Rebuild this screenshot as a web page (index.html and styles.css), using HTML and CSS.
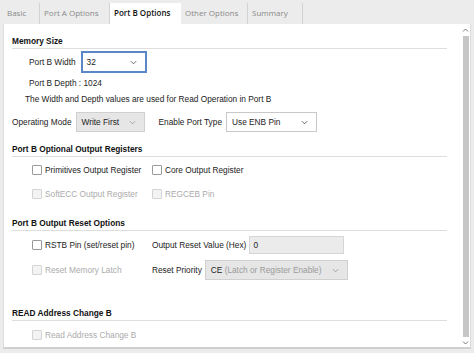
FILE: index.html
```html
<!DOCTYPE html>
<html>
<head>
<meta charset="utf-8">
<link rel="stylesheet" href="styles.css">
</head>
<body>
<div class="window">
  <div class="tabs">
    <div class="tab">Basic</div>
    <div class="tab">Port A Options</div>
    <div class="tab active">Port B Options</div>
    <div class="tab">Other Options</div>
    <div class="tab">Summary</div>
  </div>
  <div class="panel">
    <div class="content">
      <div class="section s1">Memory Size</div>
      <div class="row r-width">
        <span class="label">Port B Width</span>
        <div class="select focus w-66"><span>32</span><svg class="chev" viewBox="0 0 8 5"><path d="M1 1 L4 4 L7 1"/></svg></div>
      </div>
      <div class="line r-depth">Port B Depth : 1024</div>
      <div class="line r-note">The Width and Depth values are used for Read Operation in Port B</div>
      <div class="row r-mode">
        <span class="label">Operating Mode</span>
        <div class="select disabled w-69"><span>Write First</span><svg class="chev" viewBox="0 0 8 5"><path d="M1 1 L4 4 L7 1"/></svg></div>
        <span class="label gap-l">Enable Port Type</span>
        <div class="select w-91"><span>Use ENB Pin</span><svg class="chev" viewBox="0 0 8 5"><path d="M1 1 L4 4 L7 1"/></svg></div>
      </div>

      <div class="section s2">Port B Optional Output Registers</div>
      <div class="grid g2">
        <label class="check"><span class="box"></span>Primitives Output Register</label>
        <label class="check"><span class="box"></span>Core Output Register</label>
        <label class="check off"><span class="box"></span>SoftECC Output Register</label>
        <label class="check off"><span class="box"></span>REGCEB Pin</label>
      </div>

      <div class="section s3">Port B Output Reset Options</div>
      <div class="grid g3">
        <label class="check"><span class="box"></span>RSTB Pin (set/reset pin)</label>
        <div class="field"><span class="label">Output Reset Value (Hex)</span><div class="input">0</div></div>
        <label class="check off"><span class="box"></span>Reset Memory Latch</label>
        <div class="field"><span class="label">Reset Priority</span><div class="select disabled w-143"><span><b class="dk">CE</b> (Latch or Register Enable)</span><svg class="chev" viewBox="0 0 8 5"><path d="M1 1 L4 4 L7 1"/></svg></div></div>
      </div>

      <div class="section s4">READ Address Change B</div>
      <div class="grid g4">
        <label class="check off"><span class="box"></span>Read Address Change B</label>
      </div>
    </div>
    <div class="scrollbar">
      <svg class="arrow" viewBox="0 0 7 4"><path d="M1 3.5 L3.5 1 L6 3.5"/></svg>
      <div class="thumb"></div>
      <svg class="arrow" viewBox="0 0 7 4"><path d="M1 0.5 L3.5 3 L6 0.5"/></svg>
    </div>
  </div>
</div>
</body>
</html>
```
FILE: styles.css
```css
* { box-sizing: border-box; }
html, body { margin: 0; padding: 0; }
body {
  background: #ececec;
  font-family: "Liberation Sans", Arial, sans-serif;
  font-size: 8.3px;
  color: #222;
  white-space: nowrap;
}
.window {
  width: 474px;
  height: 353px;
  background: #ececec;
  overflow: hidden;
}
.tabs {
  display: flex;
  height: 24px;
  padding: 3px 0 0 3px;
  align-items: stretch;
}
.tab {
  flex-shrink: 0;
  font-family: "Open Sans", "Liberation Sans", sans-serif;
  font-size: 8px;
  color: #8a8a8a;
  padding: 0 0 2px 4px;
  display: flex;
  align-items: center;
  border-right: 1px solid #d2d2d2;
}
.tab:nth-child(1) { width: 37px; }
.tab:nth-child(2) { width: 70px; }
.tab:nth-child(3) { width: 71px; }
.tab:nth-child(4) { width: 67px; }
.tab:nth-child(5) { width: 55px; }
.tab.active {
  background: #fff;
  color: #111;
  font-weight: 600;
  border-right: none;
}
.panel {
  margin: 0 3px;
  height: 325px;
  background: #fff;
  border: 1px solid #dcdcdc;
  border-top: none;
  border-bottom: 2px solid #cfcfcf;
  display: flex;
}
.content {
  flex: 1;
  padding: 0 14px 0 8px;
  overflow: hidden;
}
.section {
  font-weight: bold;
  color: #111;
  height: 14px;
  line-height: 13px;
  border-bottom: 1px solid #dedede;
}
.s1 { margin-top: 11px; }
.s2 { margin-top: 11px; }
.s3 { margin-top: 12px; }
.s4 { margin-top: 26px; }
.row {
  display: flex;
  align-items: center;
  gap: 5px;
}
.r-width { margin-top: 2px; height: 22px; padding-left: 17px; }
.line { height: 16px; line-height: 16px; }
.r-depth { margin-top: 2px; padding-left: 17px; }
.r-note { padding-left: 13px; }
.r-mode { margin-top: 5px; height: 20px; gap: 4px; }
.gap-l { margin-left: 10px; }
.select {
  height: 20px;
  border: 1px solid #c8c8c8;
  background: #fff;
  display: flex;
  align-items: center;
  justify-content: space-between;
  padding: 0 8px 0 5px;
  color: #222;
}
.select.focus {
  height: 22px;
  border: 2px solid #5b87c7;
  padding-left: 4px;
}
.select.disabled { background: #e6e6e6; border-color: #d0d0d0; }
.w-66 { width: 66px; }
.w-69 { width: 69px; }
.w-91 { width: 91px; }
.w-143 { width: 143px; color: #9a9a9a; }
.dk { font-weight: normal; color: #222; }
.chev { width: 7px; height: 5px; fill: none; stroke: #555; stroke-width: 1; }
.disabled .chev { stroke: #9a9a9a; }
.grid {
  display: grid;
  grid-template-columns: 120px 1fr;
  padding-left: 20px;
}
.g2 { margin-top: 2px; row-gap: 2px; grid-auto-rows: 22px; }
.g3 { margin-top: 3px; row-gap: 3px; grid-auto-rows: 22px; }
.g4 { margin-top: 4px; grid-auto-rows: 20px; }
.check {
  display: flex;
  align-items: center;
  gap: 3px;
  color: #222;
}
.box {
  width: 10px;
  height: 10px;
  border: 1px solid #9a9a9a;
  border-radius: 1px;
  background: #fff;
}
.check.off { color: #ababab; }
.check.off .box { border-color: #d4d4d4; background: #f3f3f3; }
.field { display: flex; align-items: center; gap: 3px; }
.input {
  width: 95px;
  height: 18px;
  background: #ebebeb;
  border: 1px solid #d6d6d6;
  padding-left: 3px;
  line-height: 16px;
}
.scrollbar {
  width: 9px;
  display: flex;
  flex-direction: column;
  align-items: center;
  padding: 4px 0 2px;
}
.arrow { width: 7px; height: 4px; fill: none; stroke: #777; stroke-width: 1; }
.thumb {
  flex: 1;
  width: 6px;
  background: #c6c6c6;
  margin: 4px 0;
}
```
